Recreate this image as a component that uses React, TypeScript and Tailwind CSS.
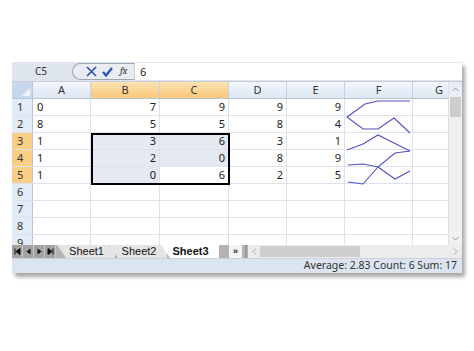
import React from "react";

const cols = [
  { key: "A", w: "w-[58px]", sel: false },
  { key: "B", w: "w-[69px]", sel: true },
  { key: "C", w: "w-[69px]", sel: true },
  { key: "D", w: "w-[58px]", sel: false },
  { key: "E", w: "w-[58px]", sel: false },
  { key: "F", w: "w-[68px]", sel: false },
];

const data = [
  ["0", "7", "9", "9", "9", ""],
  ["8", "5", "5", "8", "4", ""],
  ["1", "3", "6", "3", "1", ""],
  ["1", "2", "0", "8", "9", ""],
  ["1", "0", "6", "2", "5", ""],
  ["", "", "", "", "", ""],
  ["", "", "", "", "", ""],
  ["", "", "", "", "", ""],
  ["", "", "", "", "", ""],
];

const sparks = [
  "347,117 365,104 378,101 410,101",
  "347,117 363,129 378,129 394,118 410,133",
  "347,150 363,144 378,135 394,143 410,151",
  "348,165 363,164 378,167 395,153 410,151",
  "348,182 363,184 378,167 395,179 410,171",
];

function cellBg(r: number, c: number) {
  // selection B3:C5, active cell C5 stays white
  if (r >= 2 && r <= 4 && (c === 1 || c === 2)) {
    if (r === 4 && c === 2) return "bg-white";
    return "bg-[#e4e9f2]";
  }
  return "bg-white";
}

export default function App() {
  return (
    <div
      className="w-[474px] h-[351px] bg-white pt-[62px] pl-[12px]"
      style={{ fontFamily: '"Noto Sans", "Open Sans", sans-serif' }}
    >
      <div className="w-[450px] h-[211px] flex flex-col bg-white shadow-[3px_4px_4px_rgba(0,0,0,0.35)]">
        {/* Formula bar */}
        <div className="h-[20px] flex items-center bg-[#dfe5ed] border-b border-[#c3ccd8]">
          <div className="w-[60px] pl-[23px] text-[10px] text-[#333]">C5</div>
          <div className="h-[17px] w-[62px] flex items-center gap-[5px] pl-[13px] bg-[#e9edf2] border border-[#9ba5b1] border-r-0 rounded-l-full">
            <svg width="11" height="11" viewBox="0 0 11 11">
              <path d="M1 1 L10 10 M10 1 L1 10" stroke="#2a4fb8" strokeWidth="1.6" />
            </svg>
            <svg width="11" height="10" viewBox="0 0 11 10">
              <path d="M1 5 L4 8.5 L10 1" stroke="#2a4fb8" strokeWidth="2.2" fill="none" />
            </svg>
            <span className="text-[10px] italic text-[#333] font-serif ml-[2px]">fx</span>
          </div>
          <div className="flex-1 h-[17px] bg-white border-l border-[#c3ccd8] pl-[5px] text-[11px] leading-[17px] text-[#222]">
            6
          </div>
        </div>

        {/* Grid area */}
        <div className="h-[163px] flex">
          <div className="relative flex-1 overflow-hidden">
            {/* header row */}
            <div className="h-[17px] flex border-b border-[#b8c6d8]">
              <div className="w-[21px] shrink-0 bg-[#c8d8ec] border-r border-[#b8c6d8] flex items-end justify-end p-[2px]">
                <svg width="8" height="8" viewBox="0 0 8 8">
                  <path d="M8 0 L8 8 L0 8 Z" fill="#eef3fa" />
                </svg>
              </div>
              {cols.map((c) => (
                <div
                  key={c.key}
                  className={`${c.w} shrink-0 flex items-center justify-center text-[11px] text-[#333] border-r border-[#c5d2e2] ${
                    c.sel
                      ? "bg-gradient-to-b from-[#fde2b0] to-[#f9c87a]"
                      : "bg-gradient-to-b from-[#f3f7fc] to-[#dde7f3]"
                  }`}
                >
                  {c.key}
                </div>
              ))}
              <div className="flex-1 flex items-center justify-end pr-[5px] text-[11px] text-[#333] bg-gradient-to-b from-[#f3f7fc] to-[#dde7f3]">
                G
              </div>
            </div>

            {/* data rows */}
            {data.map((row, r) => {
              const selRow = r >= 2 && r <= 4;
              return (
                <div key={r} className="h-[17px] flex border-b border-[#dbe2ec]">
                  <div
                    className={`w-[21px] shrink-0 pl-[5px] text-[11px] leading-[16px] text-[#333] border-r border-[#b8c6d8] ${
                      selRow ? "bg-[#f9cf85]" : "bg-[#e3ebf6]"
                    }`}
                  >
                    {r + 1}
                  </div>
                  {cols.map((c, ci) => (
                    <div
                      key={c.key}
                      className={`${c.w} shrink-0 text-[11px] leading-[16px] text-[#222] border-r border-[#dbe2ec] ${
                        ci === 0 ? "text-left pl-[4px]" : "text-right pr-[3px]"
                      } ${cellBg(r, ci)}`}
                    >
                      {row[ci]}
                    </div>
                  ))}
                  <div className="flex-1 bg-white" />
                </div>
              );
            })}

            {/* selection border B3:C5 */}
            <div className="absolute left-[79px] top-[51px] w-[139px] h-[52px] border-2 border-black pointer-events-none" />

            {/* sparklines */}
            <svg
              className="absolute left-0 top-0 pointer-events-none"
              width="436"
              height="163"
              viewBox="12 82 436 163"
            >
              {sparks.map((p, i) => (
                <polyline key={i} points={p} fill="none" stroke="#5251c2" strokeWidth="1.1" />
              ))}
            </svg>
          </div>

          {/* vertical scrollbar */}
          <div className="w-[14px] flex flex-col bg-[#f0f0f0] border-l border-[#e0e0e0]">
            <div className="h-[15px] flex items-center justify-center bg-[#e8eef6]">
              <svg width="7" height="5" viewBox="0 0 7 5">
                <path d="M0.5 4 L3.5 1 L6.5 4" stroke="#999" fill="none" />
              </svg>
            </div>
            <div className="h-[20px] mx-[1px] bg-[#cdcdcd]" />
            <div className="flex-1" />
            <div className="h-[14px] flex items-center justify-center">
              <svg width="7" height="5" viewBox="0 0 7 5">
                <path d="M0.5 1 L3.5 4 L6.5 1" stroke="#999" fill="none" />
              </svg>
            </div>
          </div>
        </div>

        {/* Tab bar */}
        <div className="h-[13px] flex bg-[#b3b3b3] text-[11px]" style={{ fontFamily: '"Liberation Sans", Arial, sans-serif' }}>
          <div className="flex h-full">
            {["first", "prev", "next", "last"].map((k) => (
              <div key={k} className="w-[11px] h-full flex items-center justify-center bg-[#a2a2a2] border-r border-[#c8c8c8]">
                <svg width="7" height="7" viewBox="0 0 7 7">
                  {k === "first" && <path d="M1 0.5 V6.5 M6 0.5 L2 3.5 L6 6.5 Z" stroke="#111" fill="#111" strokeWidth="1" />}
                  {k === "prev" && <path d="M5.5 0.5 L1.5 3.5 L5.5 6.5 Z" fill="#111" />}
                  {k === "next" && <path d="M1.5 0.5 L5.5 3.5 L1.5 6.5 Z" fill="#111" />}
                  {k === "last" && <path d="M6 0.5 V6.5 M1 0.5 L5 3.5 L1 6.5 Z" stroke="#111" fill="#111" strokeWidth="1" />}
                </svg>
              </div>
            ))}
          </div>
          <div className="w-[58px] h-full ml-[1px] flex items-center justify-center pl-[1px] bg-[#e4e4e4] text-[#111] [clip-path:polygon(0_0,100%_0,100%_100%,9px_100%)]">
            Sheet1
          </div>
          <div className="w-[58px] h-full -ml-[6px] flex items-center justify-center pl-[1px] bg-[#e4e4e4] text-[#111] border-l border-[#999] [clip-path:polygon(0_0,100%_0,100%_100%,9px_100%)]">
            Sheet2
          </div>
          <div className="w-[58px] h-full -ml-[6px] flex items-center justify-center pl-[1px] bg-white font-bold text-[#111] [clip-path:polygon(0_0,100%_0,100%_100%,9px_100%)]">
            Sheet3
          </div>
          <div className="w-[10px]" />
          <div className="w-[13px] h-full flex items-center justify-center bg-[#f4f4f4] text-[9px] font-bold text-[#222] leading-none">
            »
          </div>
          <div className="w-[2px] h-full bg-[#dcdcdc] ml-[3px] border-x border-[#999]" />
          <div className="flex-1 h-full flex items-center bg-[#ececec] ml-[1px]">
            <div className="w-[12px] flex justify-center">
              <svg width="5" height="7" viewBox="0 0 5 7">
                <path d="M4 0.5 L1 3.5 L4 6.5" stroke="#aaa" fill="none" />
              </svg>
            </div>
            <div className="w-[100px] h-[11px] bg-[#cfcfcf]" />
            <div className="flex-1" />
            <div className="w-[14px] flex justify-center">
              <svg width="5" height="7" viewBox="0 0 5 7">
                <path d="M1 0.5 L4 3.5 L1 6.5" stroke="#aaa" fill="none" />
              </svg>
            </div>
          </div>
        </div>

        {/* Status bar */}
        <div className="h-[15px] flex items-center justify-end pr-[5px] bg-[#dbe4ef] border-t border-[#c9d3df] text-[10.5px] text-[#333]">
          Average: 2.83 Count: 6 Sum: 17
        </div>
      </div>
    </div>
  );
}
